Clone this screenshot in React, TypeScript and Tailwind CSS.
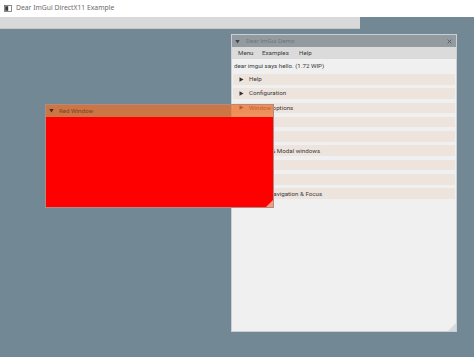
import React from 'react';

const HEADERS = [
  'Help',
  'Configuration',
  'Window options',
  'Widgets',
  'Layout',
  'Popups & Modal windows',
  'Columns',
  'Filtering',
  'Inputs, Navigation & Focus',
];

function ArrowRight({ color = '#2f2f2f' }: { color?: string }) {
  return (
    <svg width="5" height="5" viewBox="0 0 5 5" className="shrink-0">
      <polygon points="0.5,0.3 4.5,2.5 0.5,4.7" fill={color} />
    </svg>
  );
}

function ArrowDown({ color = '#2f2f2f' }: { color?: string }) {
  return (
    <svg width="5" height="5" viewBox="0 0 5 5" className="shrink-0">
      <polygon points="0.3,1 4.7,1 2.5,4.4" fill={color} />
    </svg>
  );
}

function Grip({ color, size }: { color: string; size: number }) {
  return (
    <svg width={size} height={size} viewBox="0 0 10 10" className="absolute bottom-0 right-0">
      <polygon points="10,0 10,10 0,10" fill={color} />
    </svg>
  );
}

function DemoWindow() {
  return (
    <div className="absolute left-[231px] top-[34px] flex h-[298px] w-[226px] flex-col border border-[#c9cfd2] bg-[#f0f0f0]">
      <div className="flex h-[12px] shrink-0 items-center gap-[6px] bg-[#939ba0] pl-[3px] pr-[3px] text-[#6c777d]">
        <ArrowDown color="#3f474c" />
        <span className="flex-1 leading-none">Dear ImGui Demo</span>
        <svg width="5" height="5" viewBox="0 0 5 5" className="mr-[1px]">
          <path d="M0.6 0.6 L4.4 4.4 M4.4 0.6 L0.6 4.4" stroke="#505a60" strokeWidth="0.9" />
        </svg>
      </div>
      <div className="flex h-[12px] shrink-0 items-center bg-[#dbdbdb] pl-[6px] text-[#3c3c3c]">
        <span className="w-[24px] leading-none">Menu</span>
        <span className="w-[37px] leading-none">Examples</span>
        <span className="leading-none">Help</span>
      </div>
      <div className="flex flex-col px-[1px] pt-[1px]">
        <div className="flex h-[12px] items-center pl-[1px] leading-none text-[#3a3a3a]">
          dear imgui says hello. (1.72 WIP)
        </div>
        <div className="mt-[2px] flex flex-col gap-[3.8px]">
          {HEADERS.map((h) => (
            <div
              key={h}
              className="flex h-[10.5px] items-center gap-[5px] bg-[#eee4de] pl-[6px] leading-none text-[#3a3a3a]"
            >
              <ArrowRight />
              <span>{h}</span>
            </div>
          ))}
        </div>
      </div>
      <Grip color="#d6dbde" size={8} />
    </div>
  );
}

function RedWindow() {
  return (
    <div className="absolute left-[45px] top-[104px] flex h-[104px] w-[229px] flex-col border border-[#b08a84]">
      <div className="flex h-[11.5px] shrink-0 items-center gap-[5px] bg-[rgba(237,111,40,0.73)] pl-[3px] text-[#7d3f22]">
        <ArrowDown color="#4a2414" />
        <span className="leading-none">Red Window</span>
      </div>
      <div className="relative flex-1 bg-[#ff0000]">
        <Grip color="#ef9c8a" size={7} />
      </div>
    </div>
  );
}

export default function App() {
  return (
    <div
      className="relative h-[357px] w-[474px] overflow-hidden bg-[#728995] text-[6.2px]"
      style={{ fontFamily: 'Roboto, "Noto Sans", sans-serif' }}
    >
      <div className="flex h-[17px] items-center gap-[4px] bg-white pl-[4px]">
        <svg width="8" height="7" viewBox="0 0 8 7">
          <rect x="0.5" y="0.5" width="7" height="6" fill="#ffffff" stroke="#6b6b6b" strokeWidth="0.8" />
          <rect x="1.2" y="1.2" width="3" height="4.6" fill="#3a3a3a" />
        </svg>
        <span
          className="text-[6.8px] leading-none text-[#6a6a6a]"
          style={{ fontFamily: '"Noto Sans", "Open Sans", sans-serif' }}
        >
          Dear ImGui DirectX11 Example
        </span>
      </div>
      <div className="h-[12px] w-[360px] border-b border-[#c4c8ca] bg-[#d9d9d9]" />
      <DemoWindow />
      <RedWindow />
    </div>
  );
}
